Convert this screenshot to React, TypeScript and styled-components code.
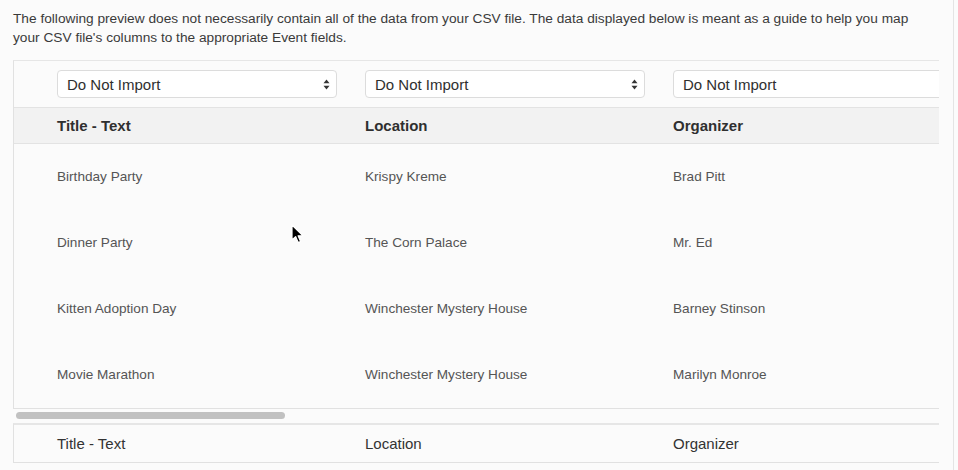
import styled, { createGlobalStyle } from "styled-components";

const columns = ["Title - Text", "Location", "Organizer"];

const rows = [
  ["Birthday Party", "Krispy Kreme", "Brad Pitt"],
  ["Dinner Party", "The Corn Palace", "Mr. Ed"],
  ["Kitten Adoption Day", "Winchester Mystery House", "Barney Stinson"],
  ["Movie Marathon", "Winchester Mystery House", "Marilyn Monroe"],
];

function SelectArrows() {
  return (
    <svg width="7" height="11" viewBox="0 0 7 11">
      <path d="M3.5 0.5 L6.5 4.2 L0.5 4.2 Z" fill="#333" />
      <path d="M3.5 10.5 L6.5 6.8 L0.5 6.8 Z" fill="#333" />
    </svg>
  );
}

function ColWidths() {
  return (
    <colgroup>
      <col style={{ width: 33 }} />
      {columns.map((c) => (
        <col key={c} style={{ width: 308 }} />
      ))}
    </colgroup>
  );
}

function App() {
  return (
    <>
      <GlobalStyle />
      <Page>
        <Intro>
          The following preview does not necessarily contain all of the data from your CSV file. The data displayed
          below is meant as a guide to help you map your CSV file's columns to the appropriate Event fields.
        </Intro>

        <ScrollArea>
          <PreviewTable>
            <ColWidths />
            <thead>
              <SelectRow>
                <td />
                {columns.map((c) => (
                  <SelectCell key={c}>
                    <FakeSelect>
                      <span>Do Not Import</span>
                      <SelectArrows />
                    </FakeSelect>
                  </SelectCell>
                ))}
              </SelectRow>
              <HeadRow>
                <th />
                {columns.map((c) => (
                  <HeadCell key={c}>{c}</HeadCell>
                ))}
              </HeadRow>
            </thead>
            <tbody>
              {rows.map((r) => (
                <DataRow key={r[0]}>
                  <td />
                  {r.map((v, i) => (
                    <DataCell key={i}>{v}</DataCell>
                  ))}
                </DataRow>
              ))}
            </tbody>
          </PreviewTable>
        </ScrollArea>

        <ScrollTrack>
          <ScrollThumb />
        </ScrollTrack>

        <FooterWrap>
          <PreviewTable>
            <ColWidths />
            <tbody>
              <FootRow>
                <td />
                {columns.map((c) => (
                  <FootCell key={c}>{c}</FootCell>
                ))}
              </FootRow>
            </tbody>
          </PreviewTable>
        </FooterWrap>

        <Cursor width="14" height="20" viewBox="0 0 14 20">
          <path
            d="M1 1 L1 16 L4.6 12.6 L7.2 18.6 L9.6 17.6 L7.1 11.8 L12 11.8 Z"
            fill="#000"
            stroke="#fff"
            strokeWidth="1.2"
            strokeLinejoin="round"
          />
        </Cursor>
      </Page>
    </>
  );
}

export default App;

const GlobalStyle = createGlobalStyle`
  html, body {
    margin: 0;
    padding: 0;
    background: #fbfbfb;
  }
  body {
    font-family: "Liberation Sans", Arial, sans-serif;
    color: #333;
  }
`;

const Page = styled.div`
  position: relative;
  width: 954px;
  height: 470px;
  box-sizing: border-box;
  border-right: 1px solid #e4e4e4;
  padding: 9px 16px 0 13px;
  overflow: hidden;
`;

const Intro = styled.p`
  margin: 0 0 13px;
  max-width: 910px;
  font-size: 13.7px;
  line-height: 19px;
  color: #3a3a3a;
`;

const ScrollArea = styled.div`
  width: 926px;
  overflow: hidden;
  box-sizing: border-box;
  border-left: 1px solid #e1e1e1;
  border-top: 1px solid #e6e6e6;
  border-bottom: 1px solid #e1e1e1;
`;

const PreviewTable = styled.table`
  table-layout: fixed;
  border-collapse: collapse;
  width: ${33 + 308 * columns.length}px;
`;

const SelectRow = styled.tr`
  height: 46px;
`;

const SelectCell = styled.td`
  padding: 9px 20px 9px 10px;
  vertical-align: top;
`;

const FakeSelect = styled.div`
  display: flex;
  align-items: center;
  justify-content: space-between;
  box-sizing: border-box;
  width: 280px;
  height: 28px;
  padding: 0 6px 0 9px;
  background: #fff;
  border: 1px solid #dcdcdc;
  border-radius: 4px;
  font-size: 15px;
  color: #2f2f2f;
`;

const HeadRow = styled.tr`
  height: 36px;
  background: #f2f2f2;
  border-top: 1px solid #e3e3e3;
  border-bottom: 1px solid #e3e3e3;
`;

const HeadCell = styled.th`
  text-align: left;
  padding: 0 10px;
  font-size: 15px;
  font-weight: bold;
  color: #2f2f2f;
`;

const DataRow = styled.tr`
  height: 66px;
`;

const DataCell = styled.td`
  padding: 0 10px;
  font-size: 13.6px;
  color: #555;
`;

const ScrollTrack = styled.div`
  width: 926px;
  height: 14px;
  display: flex;
  align-items: center;
  padding-left: 3px;
  box-sizing: border-box;
`;

const ScrollThumb = styled.div`
  width: 269px;
  height: 7px;
  border-radius: 4px;
  background: #c1c1c1;
`;

const FooterWrap = styled.div`
  width: 926px;
  overflow: hidden;
  box-sizing: border-box;
  border-left: 1px solid #e1e1e1;
  border-top: 2px solid #e6e6e6;
  border-bottom: 1px solid #e1e1e1;
`;

const FootRow = styled.tr`
  height: 37px;
`;

const FootCell = styled.td`
  padding: 0 10px;
  font-size: 15px;
  color: #333;
`;

const Cursor = styled.svg`
  position: absolute;
  left: 291px;
  top: 224px;
`;
